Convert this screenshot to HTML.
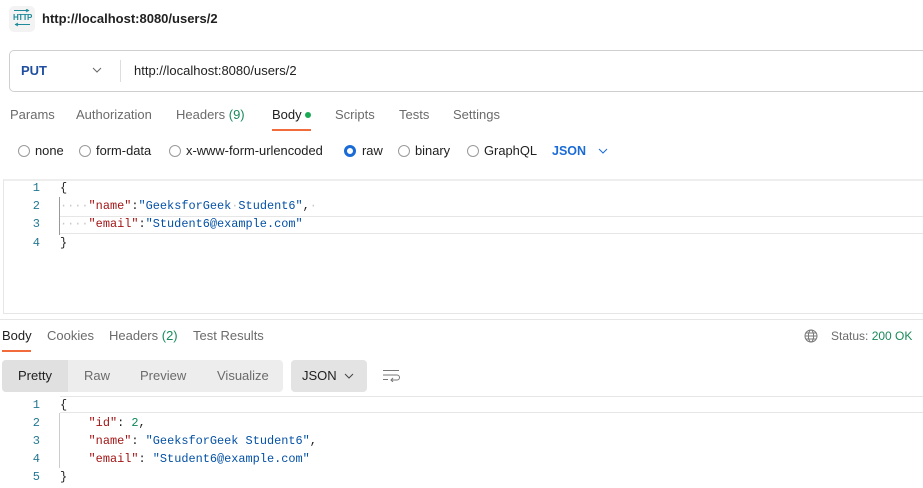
<!DOCTYPE html>
<html><head><meta charset="utf-8"><style>
*{margin:0;padding:0;box-sizing:border-box}
body{width:923px;height:488px;overflow:hidden;background:#fff;font-family:"Liberation Sans",sans-serif;font-size:12.5px;color:#212121;position:relative}
.a{position:absolute;white-space:pre;line-height:16px}
.g{color:#6b6b6b}
.m{font-family:"Liberation Mono",monospace;font-size:11.9px}
.k{color:#a31515}.s{color:#0451a5}.n{color:#098658}
.ln{color:#237893;font-family:"Liberation Mono",monospace;font-size:12px;position:absolute;width:40px;text-align:right;line-height:16px}
.r{position:absolute;width:12px;height:12px;border:1px solid #9a9a9a;border-radius:50%}
.d{color:#c8c8c8}
.rt{font-size:12.9px}
</style></head><body>
<div style="position:absolute;left:9px;top:6px;width:26px;height:26px;background:#f3f3f3;border-radius:5px"></div>
<svg style="position:absolute;left:12px;top:9px" width="20" height="19" fill="none" stroke="#1e8a9a"><path d="M2 1.5H17M14 0L16.5 1.5L14 3M18 15.5H3M6 14L3.5 15.5L6 17"/></svg>
<div class="a" style="left:13px;top:13px;font-size:8px;color:#1e8a9a;font-weight:bold;line-height:10px;letter-spacing:-0.5px">HTTP</div>
<div class="a" style="left:42px;top:11px;font-weight:bold;font-size:13px">http://localhost:8080/users/2</div>

<div style="position:absolute;left:9px;top:50px;width:930px;height:42px;border:1px solid #cfcfcf;border-radius:5px"></div>
<div class="a" style="left:21px;top:63px;color:#1f4fa0;font-weight:bold;font-size:13px">PUT</div>
<svg style="position:absolute;left:92px;top:67px" width="10" height="6"><path d="M1 1L5 5L9 1" stroke="#666" fill="none"/></svg>
<div style="position:absolute;left:120px;top:60px;width:1px;height:22px;background:#ddd"></div>
<div class="a" style="left:134px;top:63px;font-size:13px">http://localhost:8080/users/2</div>

<div class="a g" style="left:10px;top:107px;font-size:13px">Params</div>
<div class="a g" style="left:76px;top:107px;font-size:13px">Authorization</div>
<div class="a g" style="left:176px;top:107px;font-size:13px">Headers <span style="color:#1a8a5a">(9)</span></div>
<div class="a" style="left:272px;top:107px;font-size:13px">Body</div>
<div style="position:absolute;left:305px;top:112px;width:6px;height:6px;border-radius:50%;background:#1aaa55"></div>
<div style="position:absolute;left:272px;top:129px;width:39px;height:2px;background:#f26b3a"></div>
<div class="a g" style="left:335px;top:107px;font-size:13px">Scripts</div>
<div class="a g" style="left:399px;top:107px;font-size:13px">Tests</div>
<div class="a g" style="left:453px;top:107px;font-size:13px">Settings</div>

<div class="r" style="left:18px;top:145px"></div><div class="a rt" style="left:35px;top:143px">none</div>
<div class="r" style="left:79px;top:145px"></div><div class="a rt" style="left:96px;top:143px">form-data</div>
<div class="r" style="left:169px;top:145px"></div><div class="a rt" style="left:186px;top:143px">x-www-form-urlencoded</div>
<div class="r" style="left:344px;top:145px;border:3.5px solid #1a6bd6"></div><div class="a rt" style="left:362px;top:143px">raw</div>
<div class="r" style="left:398px;top:145px"></div><div class="a rt" style="left:415px;top:143px">binary</div>
<div class="r" style="left:467px;top:145px"></div><div class="a rt" style="left:484px;top:143px">GraphQL</div>
<div class="a" style="left:552px;top:143px;color:#1a6bd6;font-weight:bold">JSON</div>
<svg style="position:absolute;left:598px;top:148px" width="10" height="6"><path d="M1 1L5 5L9 1" stroke="#1a6bd6" fill="none"/></svg>

<div style="position:absolute;left:3px;top:179px;width:930px;height:135px;border:1px solid #e6e6e6;border-top:2px solid #eee"></div>
<div style="position:absolute;left:60px;top:216px;width:870px;height:18px;border-top:1px solid #e6e6e6;border-bottom:1px solid #e6e6e6"></div>
<div style="position:absolute;left:59px;top:197px;width:1px;height:38px;background:#999"></div>
<div class="ln" style="left:0;top:180px">1</div>
<div class="ln" style="left:0;top:198px">2</div>
<div class="ln" style="left:0;top:216px">3</div>
<div class="ln" style="left:0;top:235px">4</div>
<div class="a m" style="left:60px;top:180px">{</div>
<div class="a m" style="left:60px;top:198px"><span class="d">····</span><span class="k">"name"</span>:<span class="s">"GeeksforGeek<span class="d">·</span>Student6"</span>,<span class="d">·</span></div>
<div class="a m" style="left:60px;top:216px"><span class="d">····</span><span class="k">"email"</span>:<span class="s">"Student6@example.com"</span></div>
<div class="a m" style="left:60px;top:235px">}</div>

<div style="position:absolute;left:0;top:319px;width:923px;height:1px;background:#e6e6e6"></div>
<div class="a" style="left:2px;top:328px;font-size:13px">Body</div>
<div style="position:absolute;left:2px;top:350px;width:29px;height:2px;background:#f26b3a"></div>
<div class="a g" style="left:47px;top:328px;font-size:13px">Cookies</div>
<div class="a g" style="left:109px;top:328px;font-size:13px">Headers <span style="color:#1a8a5a">(2)</span></div>
<div class="a g" style="left:193px;top:328px;font-size:13px">Test Results</div>
<svg style="position:absolute;left:804px;top:329px" width="14" height="14" fill="none" stroke="#777"><circle cx="7" cy="7" r="6"/><ellipse cx="7" cy="7" rx="2.6" ry="6"/><path d="M1 7H13M2 4H12M2 10H12"/></svg>
<div class="a g" style="left:831px;top:328px;font-size:12px">Status: <span style="color:#1a8a5a">200 OK</span></div>

<div style="position:absolute;left:2px;top:360px;width:281px;height:32px;background:#ededed;border-radius:4px"></div>
<div style="position:absolute;left:2px;top:360px;width:66px;height:32px;background:#e0e0e0;border-radius:4px 0 0 4px"></div>
<div class="a" style="left:18px;top:368px;font-size:13px">Pretty</div>
<div class="a g" style="left:84px;top:368px;font-size:13px">Raw</div>
<div class="a g" style="left:140px;top:368px;font-size:13px">Preview</div>
<div class="a g" style="left:217px;top:368px;font-size:13px">Visualize</div>
<div style="position:absolute;left:291px;top:360px;width:76px;height:32px;background:#e3e3e3;border-radius:4px"></div>
<div class="a" style="left:302px;top:368px;font-size:13px">JSON</div>
<svg style="position:absolute;left:344px;top:373px" width="10" height="6"><path d="M1 1L5 5L9 1" stroke="#444" fill="none"/></svg>
<svg style="position:absolute;left:383px;top:368px" width="17" height="14" fill="none" stroke="#777"><path d="M0 2.5H16M0 7H14a2.5 2.5 0 0 1 0 5H8M10 10L8 12L10 14M0 11.5H5"/></svg>

<div style="position:absolute;left:60px;top:396px;width:870px;height:17px;border-top:1px solid #e6e6e6;border-bottom:1px solid #e6e6e6"></div>
<div style="position:absolute;left:59px;top:413px;width:1px;height:55px;background:#ccc"></div>
<div class="ln" style="left:0;top:397px">1</div>
<div class="ln" style="left:0;top:415px">2</div>
<div class="ln" style="left:0;top:433px">3</div>
<div class="ln" style="left:0;top:451px">4</div>
<div class="ln" style="left:0;top:469px">5</div>
<div class="a m" style="left:60px;top:397px">{</div>
<div class="a m" style="left:60px;top:415px">    <span class="k">"id"</span>: <span class="n">2</span>,</div>
<div class="a m" style="left:60px;top:433px">    <span class="k">"name"</span>: <span class="s">"GeeksforGeek Student6"</span>,</div>
<div class="a m" style="left:60px;top:451px">    <span class="k">"email"</span>: <span class="s">"Student6@example.com"</span></div>
<div class="a m" style="left:60px;top:469px">}</div>
</body></html>
